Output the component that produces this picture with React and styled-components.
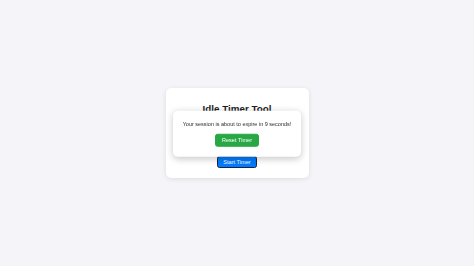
import styled, { createGlobalStyle } from 'styled-components';

const GlobalStyle = createGlobalStyle`
  html, body {
    margin: 0;
    padding: 0;
  }
  body {
    background: #f4f4f9;
    font-family: 'Liberation Sans', Arial, sans-serif;
  }
`;

const Page = styled.div`
  height: 100vh;
  display: flex;
  align-items: center;
  justify-content: center;
`;

const Card = styled.div`
  width: 143px;
  box-sizing: border-box;
  padding: 10px;
  background: #fff;
  border-radius: 5px;
  box-shadow: 0 1px 5px rgba(0, 0, 0, 0.1);
  display: flex;
  flex-direction: column;
  align-items: center;
`;

const Title = styled.h1`
  margin: 5px 0 41px;
  font-size: 9.8px;
  line-height: 11.5px;
  font-weight: 700;
  color: #1f1f1f;
`;

const Button = styled.button`
  font-family: inherit;
  font-size: 5.6px;
  line-height: 10px;
  height: 12.5px;
  padding: 0 5.5px;
  color: #fff;
  background: ${(p) => p.$bg};
  border: 1px solid ${(p) => (p.$focused ? '#1c2333' : p.$bg)};
  border-radius: 2.5px;
  cursor: pointer;
`;

const Modal = styled.div`
  position: fixed;
  top: 50%;
  left: 50%;
  transform: translate(-50%, calc(-50% + 0.5px));
  width: 128px;
  box-sizing: border-box;
  padding: 10px 6px 10px;
  background: #fff;
  border-radius: 5px;
  box-shadow: 0 2px 7px rgba(0, 0, 0, 0.22);
  display: flex;
  flex-direction: column;
  align-items: center;
  gap: 6px;
`;

const Message = styled.p`
  margin: 0;
  font-size: 5.5px;
  line-height: 7px;
  color: #2b2b2b;
  white-space: nowrap;
`;

export default function App() {
  return (
    <>
      <GlobalStyle />
      <Page>
        <Card>
          <Title>Idle Timer Tool</Title>
          <Button $bg="#007bff" $focused>Start Timer</Button>
        </Card>
        <Modal>
          <Message>Your session is about to expire in 9 seconds!</Message>
          <Button $bg="#28a745">Reset Timer</Button>
        </Modal>
      </Page>
    </>
  );
}
